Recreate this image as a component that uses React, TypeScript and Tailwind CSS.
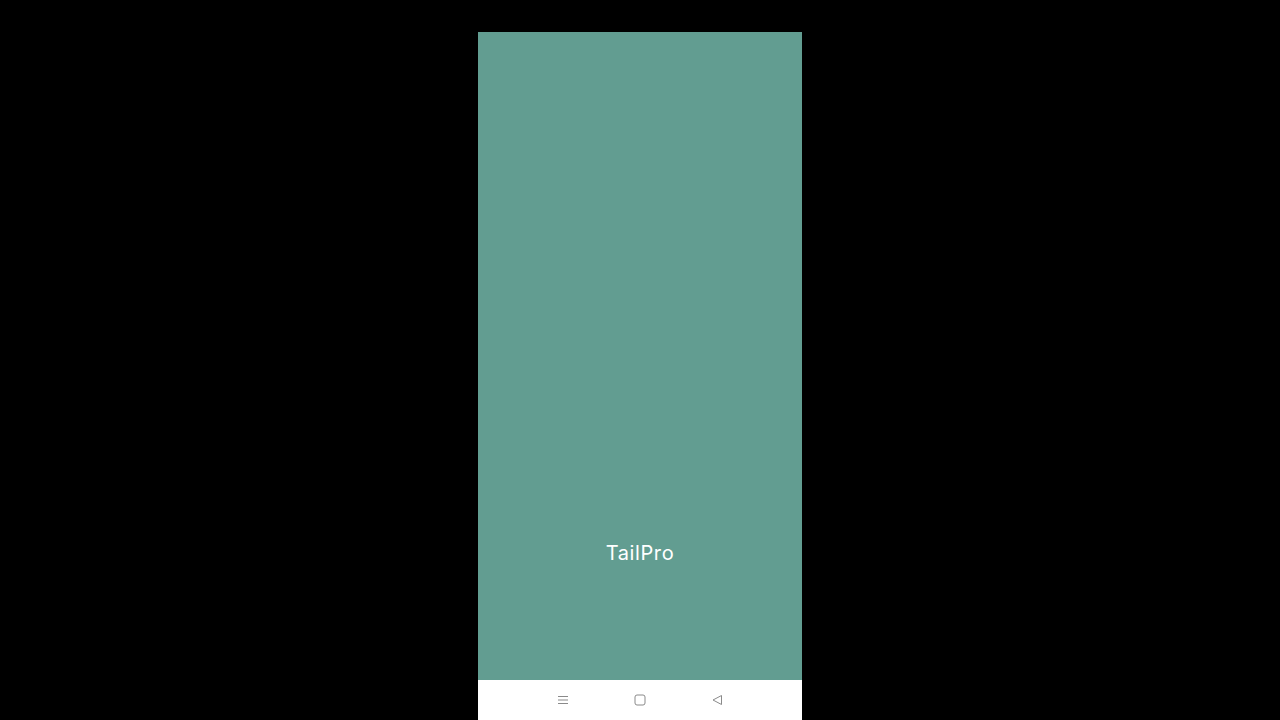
export default function App() {
  return (
    <div className="w-[1280px] h-[720px] bg-black flex justify-center">
      <div className="w-[324px] h-full flex flex-col pt-[32px]">
        {/* splash */}
        <div className="flex-1 bg-[#629d91] flex flex-col items-center">
          <div className="h-[506px]" />
          <span className="text-white text-[20px] font-['Inter',sans-serif] tracking-[0.6px]">TailPro</span>
        </div>
        {/* system nav bar */}
        <div className="h-[40px] bg-white flex items-center justify-center gap-[65px]">
          <svg width="12" height="12" viewBox="0 0 12 12" fill="none" stroke="#8a8a8a" strokeWidth="1">
            <path d="M1 2.5h10M1 6h10M1 9.5h10" />
          </svg>
          <svg width="12" height="12" viewBox="0 0 12 12" fill="none" stroke="#8a8a8a" strokeWidth="1">
            <rect x="1" y="1" width="10" height="10" rx="2" />
          </svg>
          <svg width="12" height="12" viewBox="0 0 12 12" fill="none" stroke="#8a8a8a" strokeWidth="1">
            <path d="M10.5 1.5v9L2 6z" strokeLinejoin="round" />
          </svg>
        </div>
      </div>
    </div>
  );
}
